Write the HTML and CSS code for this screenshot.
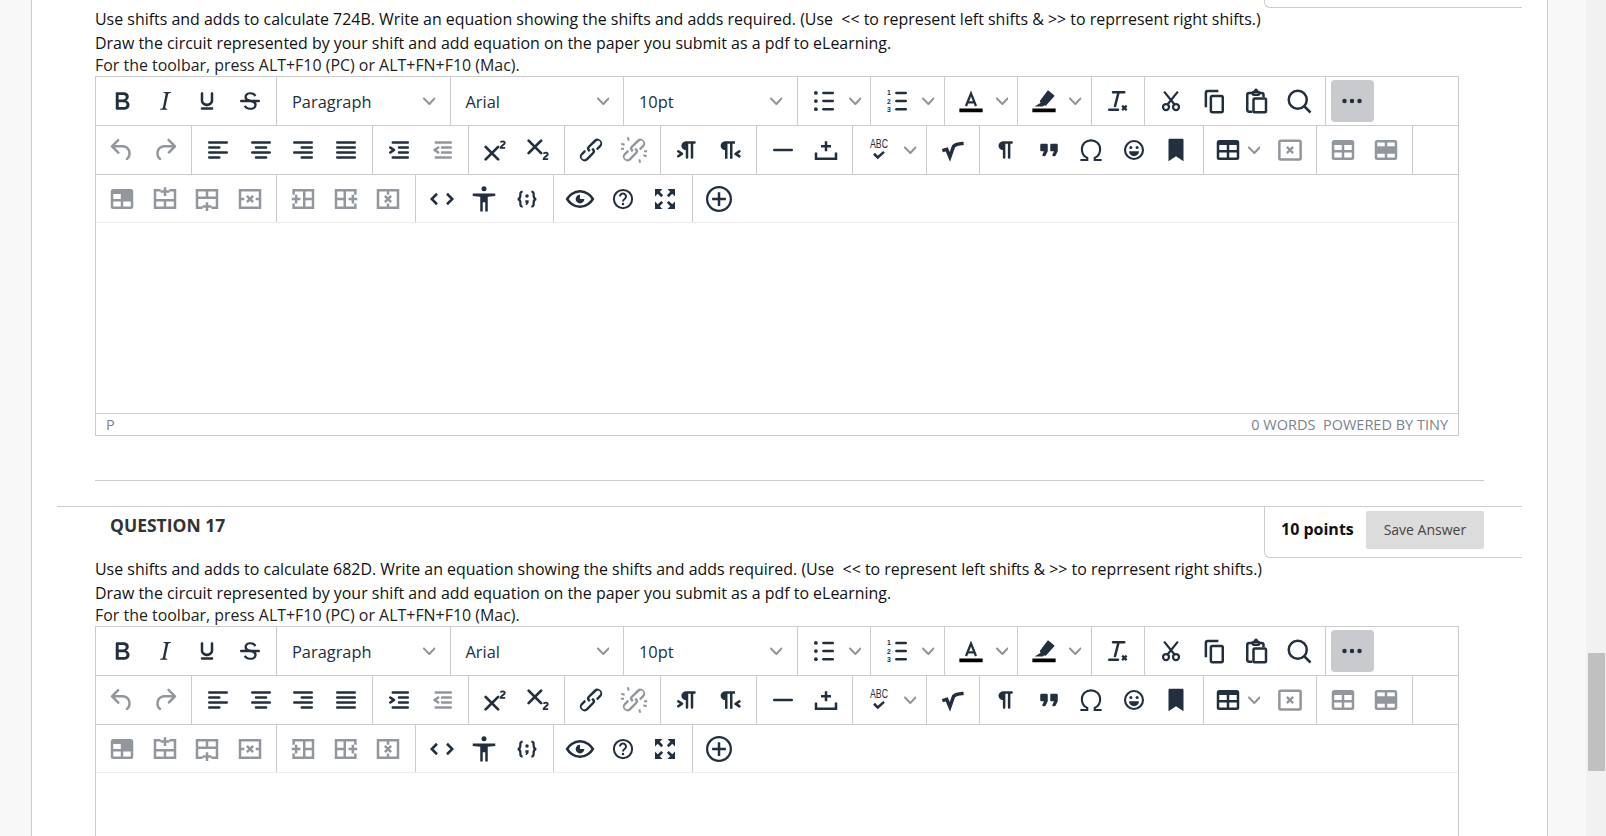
FILE: index.html
```html
<!DOCTYPE html>
<html lang="en">

<head>
    <meta charset="UTF-8">
    <meta name="viewport" content="width=device-width, initial-scale=1.0">
    <title>Test Questions</title>
    <link rel="stylesheet" href="styles.css">
</head>

<body>
    <!-- toolbar icons, 24 unit grid -->
    <svg class="defs" aria-hidden="true">
        <symbol id="i-bold" viewBox="0 0 24 24"><path d="M7.8 19c-.3 0-.5 0-.6-.2l-.2-.5V5.7c0-.2 0-.4.2-.5l.6-.2h5c1.5 0 2.7.3 3.500 1 .7.6 1.100 1.400 1.100 2.500a3 3 0 0 1-.6 1.900c-.4.6-1 1-1.600 1.200.4.1.9.3 1.300.6s.8.7 1 1.200c.4.4.5 1 .5 1.600 0 1.300-.4 2.300-1.300 3-.8.7-2.100 1-3.800 1H7.800zm5-8.300c.6 0 1.200-.1 1.600-.5.4-.3.6-.7.6-1.300 0-1.100-.8-1.700-2.300-1.700H9.300v3.500h3.400zm.5 6c.7 0 1.300-.1 1.700-.4.4-.4.6-.9.6-1.500s-.2-1-.7-1.400c-.4-.3-1-.4-2-.4H9.400v3.800h4z"/></symbol>
        <symbol id="i-italic" viewBox="0 0 24 24"><path d="M16.7 4.7l-.1.9h-.3c-.6 0-1 0-1.400.3-.3.3-.4.6-.5 1.100l-2.100 9.800v.6c0 .5.4.8 1.400.8h.2l-.2.8H8l.2-.8h.2c1.100 0 1.800-.5 2-1.500l2-9.800.1-.5c0-.6-.4-.8-1.400-.8h-.3l.2-.9h5.800z"/></symbol>
        <symbol id="i-underline" viewBox="0 0 24 24"><path d="M16 5c.6 0 1 .4 1 1v5.500a4 4 0 0 1-.4 1.800l-1 1.400a5.300 5.300 0 0 1-5.500 1 5 5 0 0 1-1.600-1c-.5-.4-.8-.9-1.100-1.400a4 4 0 0 1-.4-1.800V6c0-.6.4-1 1-1s1 .4 1 1v5.500c0 .3 0 .6.2 1l.6.7a3.300 3.300 0 0 0 2.200.8 3.400 3.400 0 0 0 2.200-.8c.3-.2.4-.5.6-.8l.2-.9V6c0-.6.4-1 1-1zM8 17h8c.6 0 1 .4 1 1s-.4 1-1 1H8a1 1 0 0 1 0-2z"/></symbol>
        <symbol id="i-strike" viewBox="0 0 24 24"><path d="M15.600 8.500c-.5-.7-1-1.100-1.300-1.300-.6-.4-1.300-.6-2-.6-2.700 0-2.800 1.700-2.800 2.100 0 1.600 1.800 2 3.200 2.300 4.400.9 4.600 2.800 4.600 3.900 0 1.400-.7 4.100-5 4.100A6.200 6.200 0 0 1 7 16.400l1.500-1.100c.4.6 1.600 2 3.700 2 1.600 0 2.500-.4 3-1.200.4-.8.3-2-.8-2.600-.7-.4-1.600-.7-2.900-1-1-.2-3.900-.8-3.900-3.600C7.600 6 10.300 5 12.400 5c2.900 0 4.200 1.600 4.700 2.400l-1.500 1.100z"/><path d="M5 11h14a1 1 0 0 1 0 2H5a1 1 0 0 1 0-2z"/></symbol>
        <symbol id="i-chevron" viewBox="0 0 10 10"><path d="M8.700 2.200c.3-.3.8-.3 1 0 .4.4.4.9 0 1.200L5.700 7.800c-.3.3-.9.3-1.200 0L.2 3.400a.8.8 0 0 1 0-1.200c.3-.3.8-.3 1.100 0L5 6l3.700-3.800z"/></symbol>
        <symbol id="i-bullist" viewBox="0 0 24 24"><circle cx="5.500" cy="5.500" r="1.500"/><circle cx="5.500" cy="12" r="1.500"/><circle cx="5.500" cy="18.500" r="1.500"/><rect x="10.500" y="4.500" width="9.500" height="2" rx="1"/><rect x="10.500" y="11" width="9.500" height="2" rx="1"/><rect x="10.500" y="17.500" width="9.500" height="2" rx="1"/></symbol>
        <symbol id="i-numlist" viewBox="0 0 24 24"><text class="icon-num" x="5.500" y="7.500">1</text><text class="icon-num" x="5.500" y="14">2</text><text class="icon-num" x="5.500" y="20.500">3</text><rect x="10.500" y="4.500" width="9.500" height="2" rx="1"/><rect x="10.500" y="11" width="9.500" height="2" rx="1"/><rect x="10.500" y="17.500" width="9.500" height="2" rx="1"/></symbol>
        <symbol id="i-forecolor" viewBox="0 0 24 24"><path d="M8 16l4-10 4 10M9.400 13h5.200" fill="none" stroke="currentColor" stroke-width="1.800"/><rect class="swatch" x="2.700" y="18" width="18.600" height="3"/></symbol>
        <symbol id="i-hilite" viewBox="0 0 24 24"><path d="M15.500 3.600l4.600 3.700c.3.3.3.7 0 1l-6.500 7.200c-.3.3-.7.3-1 .1l-.4-.3-1.300 1H4.500l4.800-3-.5-.8c-.2-.3-.2-.7.1-1l5.900-7.800c.2-.2.5-.2.700-.1z"/><rect class="swatch" x="2.700" y="18" width="18.600" height="3"/></symbol>
        <symbol id="i-clear" viewBox="0 0 24 24"><path d="M13.200 6a1 1 0 0 1 0 .2l-2.600 10a1 1 0 0 1-1 .8h-.2a.8.8 0 0 1-.8-1l2.600-10H8a1 1 0 1 1 0-2h9a1 1 0 0 1 0 2h-3.800zM5 18h7a1 1 0 0 1 0 2H5a1 1 0 0 1 0-2z"/><path d="M15.300 15.700l3.600 3.600m0-3.600l-3.600 3.600" fill="none" stroke="currentColor" stroke-width="1.800"/></symbol>
        <symbol id="i-cut" viewBox="0 0 24 24"><g fill="none" stroke="currentColor" stroke-width="1.800"><circle cx="8" cy="16.800" r="2.400"/><circle cx="16" cy="16.800" r="2.400"/><path d="M6.500 4.500L15 15M17.500 4.500L9 15"/></g></symbol>
        <symbol id="i-copy" viewBox="0 0 24 24"><g fill="none" stroke="currentColor" stroke-width="2"><path d="M15.500 4H7a1.500 1.500 0 0 0-1.500 1.500V17"/><rect x="9.500" y="8" width="9.500" height="13" rx="1.200"/></g></symbol>
        <symbol id="i-paste" viewBox="0 0 24 24"><g fill="none" stroke="currentColor" stroke-width="2"><path d="M9 20.500H6.500A1.500 1.500 0 0 1 5 19V7a1.500 1.500 0 0 1 1.500-1.500H9M15 5.500h1.500A1.500 1.500 0 0 1 18 7v2"/><rect x="10" y="10" width="10" height="11" rx="1"/><rect x="9.500" y="4.500" width="5" height="2.500" rx="1"/></g><circle cx="12" cy="3.500" r="1.500"/></symbol>
        <symbol id="i-search" viewBox="0 0 24 24"><g fill="none" stroke="currentColor" stroke-width="2"><circle cx="11" cy="11" r="7.200"/><path d="M16 16l5.200 5.200"/></g></symbol>
        <symbol id="i-more" viewBox="0 0 24 24"><circle cx="6" cy="12" r="1.800"/><circle cx="12" cy="12" r="1.800"/><circle cx="18" cy="12" r="1.800"/></symbol>
        <symbol id="i-undo" viewBox="0 0 24 24"><path d="M6.400 8H12c3.700 0 6.200 2 6.800 5.100.6 2.700-.4 5.600-2.300 6.800a1 1 0 0 1-1-1.800c1.100-.6 1.800-2.700 1.400-4.600-.5-2.100-2.100-3.500-4.900-3.500H6.400l3.300 3.300a1 1 0 1 1-1.400 1.400l-5-5a1 1 0 0 1 0-1.400l5-5a1 1 0 0 1 1.400 1.400L6.400 8z"/></symbol>
        <symbol id="i-redo" viewBox="0 0 24 24"><path d="M17.600 10H12c-2.800 0-4.400 1.400-4.900 3.500-.4 2 .3 4 1.400 4.600a1 1 0 1 1-1 1.800c-1.900-1.200-2.900-4.100-2.300-6.800.6-3 3.100-5.100 6.800-5.100h5.600l-3.300-3.300a1 1 0 1 1 1.400-1.400l5 5a1 1 0 0 1 0 1.400l-5 5a1 1 0 0 1-1.400-1.400l3.300-3.300z"/></symbol>
        <symbol id="i-left" viewBox="0 0 24 24"><rect x="4" y="5" width="16" height="2" rx="1"/><rect x="4" y="9" width="10" height="2" rx="1"/><rect x="4" y="13" width="16" height="2" rx="1"/><rect x="4" y="17" width="10" height="2" rx="1"/></symbol>
        <symbol id="i-center" viewBox="0 0 24 24"><rect x="4" y="5" width="16" height="2" rx="1"/><rect x="7" y="9" width="10" height="2" rx="1"/><rect x="4" y="13" width="16" height="2" rx="1"/><rect x="7" y="17" width="10" height="2" rx="1"/></symbol>
        <symbol id="i-right" viewBox="0 0 24 24"><rect x="4" y="5" width="16" height="2" rx="1"/><rect x="10" y="9" width="10" height="2" rx="1"/><rect x="4" y="13" width="16" height="2" rx="1"/><rect x="10" y="17" width="10" height="2" rx="1"/></symbol>
        <symbol id="i-justify" viewBox="0 0 24 24"><rect x="4" y="5" width="16" height="2" rx="1"/><rect x="4" y="9" width="16" height="2" rx="1"/><rect x="4" y="13" width="16" height="2" rx="1"/><rect x="4" y="17" width="16" height="2" rx="1"/></symbol>
        <symbol id="i-indent" viewBox="0 0 24 24"><path d="M7 5h12c.6 0 1 .4 1 1s-.4 1-1 1H7a1 1 0 1 1 0-2zm5 4h7c.6 0 1 .4 1 1s-.4 1-1 1h-7a1 1 0 0 1 0-2zm0 4h7c.6 0 1 .4 1 1s-.4 1-1 1h-7a1 1 0 0 1 0-2zm-5 4h12a1 1 0 0 1 0 2H7a1 1 0 0 1 0-2zm-2.600-3.800L6.200 12l-1.800-1.200a1 1 0 0 1 1.200-1.600l3 2a1 1 0 0 1 0 1.600l-3 2a1 1 0 1 1-1.200-1.600z"/></symbol>
        <symbol id="i-outdent" viewBox="0 0 24 24"><path d="M7 5h12c.6 0 1 .4 1 1s-.4 1-1 1H7a1 1 0 1 1 0-2zm5 4h7c.6 0 1 .4 1 1s-.4 1-1 1h-7a1 1 0 0 1 0-2zm0 4h7c.6 0 1 .4 1 1s-.4 1-1 1h-7a1 1 0 0 1 0-2zm-5 4h12a1 1 0 0 1 0 2H7a1 1 0 0 1 0-2zm2.600-6.200L7.800 12l1.800 1.200a1 1 0 1 1-1.200 1.600l-3-2a1 1 0 0 1 0-1.600l3-2a1 1 0 1 1 1.200 1.600z"/></symbol>
        <symbol id="i-sup" viewBox="0 0 24 24"><path d="M4.500 9.500l10 10M14.500 9.500l-10 10" fill="none" stroke="currentColor" stroke-width="2.200" stroke-linecap="round"/><path d="M16.500 6c.3-1.200 3.300-1.400 3.300.4 0 1.400-3.300 2.400-3.300 3.900h3.600" fill="none" stroke="currentColor" stroke-width="1.500"/></symbol>
        <symbol id="i-sub" viewBox="0 0 24 24"><path d="M4.500 4.500l10 10M14.500 4.500l-10 10" fill="none" stroke="currentColor" stroke-width="2.200" stroke-linecap="round"/><path d="M16.500 15c.3-1.200 3.300-1.400 3.300.4 0 1.400-3.300 2.400-3.300 3.900h3.600" fill="none" stroke="currentColor" stroke-width="1.500"/></symbol>
        <symbol id="i-link" viewBox="0 0 24 24"><path d="M6.200 12.300a1 1 0 0 1 1.400 1.400l-2 2a2 2 0 1 0 2.600 2.800l4.800-4.800a1 1 0 0 0 0-1.400 1 1 0 1 1 1.400-1.300 2.900 2.900 0 0 1 0 4L9.600 20a3.900 3.900 0 0 1-5.500-5.500l2-2zm11.600-.6a1 1 0 0 1-1.400-1.400l2-2a2 2 0 1 0-2.600-2.800L11 10a1 1 0 0 0 0 1.400 1 1 0 1 1-1.400 1.300 2.900 2.900 0 0 1 0-4L14.400 4a3.900 3.900 0 0 1 5.500 5.500l-2 2z"/></symbol>
        <symbol id="i-unlink" viewBox="0 0 24 24"><path d="M6.200 12.300a1 1 0 0 1 1.400 1.400l-2 2a2 2 0 1 0 2.600 2.800l4.800-4.800a1 1 0 0 0 0-1.400 1 1 0 1 1 1.400-1.300 2.900 2.900 0 0 1 0 4L9.600 20a3.900 3.900 0 0 1-5.500-5.500l2-2zm11.600-.6a1 1 0 0 1-1.400-1.400l2-2a2 2 0 1 0-2.600-2.800L11 10a1 1 0 0 0 0 1.400 1 1 0 1 1-1.400 1.300 2.900 2.900 0 0 1 0-4L14.400 4a3.900 3.900 0 0 1 5.500 5.500l-2 2z"/><path d="M7 1.800l.8 2.700M1.800 7l2.700.8M1.500 11H4M17 22.200l-.8-2.700M22.200 17l-2.700-.8M22.500 13H20" fill="none" stroke="currentColor" stroke-width="1.600"/></symbol>
        <symbol id="i-ltr" viewBox="0 0 24 24"><path d="M11 5h7a1 1 0 0 1 0 2h-1v11a1 1 0 0 1-2 0V7h-2v11a1 1 0 0 1-2 0v-6c-.5 0-1 0-1.400-.3A3.400 3.400 0 0 1 7.800 10a3.300 3.300 0 0 1 0-2.800 3.400 3.400 0 0 1 1.800-1.800L11 5zM4.400 16.200L6.200 15l-1.800-1.200a1 1 0 0 1 1.200-1.600l3 2a1 1 0 0 1 0 1.600l-3 2a1 1 0 1 1-1.200-1.600z"/></symbol>
        <symbol id="i-rtl" viewBox="0 0 24 24"><path d="M8 5h8v2h-2v12h-2V7h-2v12H8v-7c-.5 0-1 0-1.400-.3A3.400 3.400 0 0 1 4.800 10a3.300 3.300 0 0 1 0-2.800 3.400 3.400 0 0 1 1.800-1.800L8 5zm12 11.200a1 1 0 1 1-1 1.800l-3-2a1 1 0 0 1 0-1.800l3-2a1 1 0 1 1 1 1.800L18.400 15l1.800 1.200z"/></symbol>
        <symbol id="i-hr" viewBox="0 0 24 24"><rect x="4" y="11" width="16" height="2" rx="1"/></symbol>
        <symbol id="i-pagebreak" viewBox="0 0 24 24"><path d="M12 5v8M8 9h8M4 14v5h16v-5" fill="none" stroke="currentColor" stroke-width="2"/></symbol>
        <symbol id="i-spell" viewBox="0 0 24 24"><text class="icon-abc" x="12" y="10.500" textLength="14.500" lengthAdjust="spacingAndGlyphs">ABC</text><path d="M8 15l3 3 5-4.500" fill="none" stroke="currentColor" stroke-width="2"/></symbol>
        <symbol id="i-sqrt" viewBox="0 0 24 24"><path d="M3.500 12.500l3.500-1 2.500 6 3-8.500c2-2 4.500-2 8-2.300" fill="none" stroke="currentColor" stroke-width="2.800"/></symbol>
        <symbol id="i-para" viewBox="0 0 24 24"><path d="M9.500 5h7a1 1 0 0 1 0 2h-1v11a1 1 0 0 1-2 0V7h-2v11a1 1 0 0 1-2 0v-6c-.5 0-1 0-1.400-.3A3.400 3.400 0 0 1 6.300 10a3.300 3.300 0 0 1 0-2.800 3.400 3.400 0 0 1 1.800-1.800L9.500 5z"/></symbol>
        <symbol id="i-quote" viewBox="0 0 24 24"><path d="M7.500 17h.9c.4 0 .7-.2.9-.6L11 13V8c0-.6-.4-1-1-1H6a1 1 0 0 0-1 1v4c0 .6.4 1 1 1h2l-1.300 2.700a1 1 0 0 0 .8 1.300zm8 0h.9c.4 0 .7-.2.9-.6L19 13V8c0-.6-.4-1-1-1h-4a1 1 0 0 0-1 1v4c0 .6.4 1 1 1h2l-1.300 2.700a1 1 0 0 0 .8 1.300z"/></symbol>
        <symbol id="i-omega" viewBox="0 0 24 24"><path d="M3.500 20H9v-1.700C6.300 17 4.700 14.300 4.700 11.300 4.700 7 8 4.300 12 4.300s7.300 2.700 7.300 7c0 3-1.600 5.700-4.300 7V20h5.500" fill="none" stroke="currentColor" stroke-width="1.700"/></symbol>
        <symbol id="i-emoji" viewBox="0 0 24 24"><circle cx="12" cy="12" r="7.200" fill="none" stroke="currentColor" stroke-width="1.700"/><circle cx="9.500" cy="10" r="1.200"/><circle cx="14.500" cy="10" r="1.200"/><path d="M8 13h8a4 4 0 0 1-8 0z"/></symbol>
        <symbol id="i-bookmark" viewBox="0 0 24 24"><path d="M6 4v17l6-4 6 4V4c0-.6-.4-1-1-1H7a1 1 0 0 0-1 1z"/></symbol>
        <symbol id="i-table" viewBox="0 0 24 24"><path fill-rule="evenodd" d="M19 4a2 2 0 0 1 2 2v12a2 2 0 0 1-2 2H5a2 2 0 0 1-2-2V6c0-1.100.9-2 2-2h14zM5 14v4h6v-4H5zm14 0h-6v4h6v-4zm0-6h-6v4h6V8zM5 12h6V8H5v4z"/></symbol>
        <symbol id="i-tabledel" viewBox="0 0 24 24"><rect x="3.500" y="4.500" width="17" height="15" rx="1" fill="none" stroke="currentColor" stroke-width="2"/><path d="M9.500 9.500l5 5m0-5l-5 5" fill="none" stroke="currentColor" stroke-width="1.800"/></symbol>
        <symbol id="i-rowprops" viewBox="0 0 24 24"><path fill-rule="evenodd" d="M19 4a2 2 0 0 1 2 2v12a2 2 0 0 1-2 2H5a2 2 0 0 1-2-2V6c0-1.100.9-2 2-2h14zM5 15v3h6v-3H5zm14 0h-6v3h6v-3zM13 6v3h6V6h-6zM5 9h6V6H5v3z"/></symbol>
        <symbol id="i-cellprops" viewBox="0 0 24 24"><path fill-rule="evenodd" d="M19 4a2 2 0 0 1 2 2v12a2 2 0 0 1-2 2H5a2 2 0 0 1-2-2V6c0-1.100.9-2 2-2h14zM5 14v4h6v-4H5zm14 0h-6v4h6v-4zM5 12h6V8H5v4z"/></symbol>
        <symbol id="i-rowbefore" viewBox="0 0 24 24"><path d="M8.500 5H4v14h16V5h-4.500M4 13h16M12 13v6M12 2.500v7M8.500 6h7" fill="none" stroke="currentColor" stroke-width="2"/></symbol>
        <symbol id="i-rowafter" viewBox="0 0 24 24"><path d="M8.500 19H4V5h16v14h-4.500M4 11h16M12 5v6M12 14.500v7M8.500 18h7" fill="none" stroke="currentColor" stroke-width="2"/></symbol>
        <symbol id="i-rowdel" viewBox="0 0 24 24"><path d="M4 5h16v14H4zM4 12h3.500M16.500 12H20M9.500 9.500l5 5m0-5l-5 5" fill="none" stroke="currentColor" stroke-width="2"/></symbol>
        <symbol id="i-colbefore" viewBox="0 0 24 24"><path d="M4.500 8.500V5H20v14H4.500v-3.500M13 5v14M13 12h7M3 12h7M6.500 8.500v7" fill="none" stroke="currentColor" stroke-width="2"/></symbol>
        <symbol id="i-colafter" viewBox="0 0 24 24"><path d="M19.500 8.500V5H4v14h15.500v-3.500M11 5v14M4 12h7M14 12h7M17.500 8.500v7" fill="none" stroke="currentColor" stroke-width="2"/></symbol>
        <symbol id="i-coldel" viewBox="0 0 24 24"><path d="M4 5h16v14H4zM12 5v3.500M12 15.500V19M9.500 9.500l5 5m0-5l-5 5" fill="none" stroke="currentColor" stroke-width="2"/></symbol>
        <symbol id="i-code" viewBox="0 0 24 24"><path d="M8 7.800L3.800 12 8 16.200M16 7.800l4.200 4.200-4.200 4.200" fill="none" stroke="currentColor" stroke-width="2"/></symbol>
        <symbol id="i-access" viewBox="0 0 24 24"><circle cx="12" cy="3.800" r="2"/><path d="M3 7.500h18v2l-6 .7V22h-2v-7.500h-2V22H9V10.200l-6-.7z"/></symbol>
        <symbol id="i-template" viewBox="0 0 24 24"><path d="M8.500 6C6.500 6 6.700 7.500 6.700 9c0 1.600-.5 3-2.200 3 1.700 0 2.200 1.400 2.200 3 0 1.500-.2 3 1.800 3M15.500 6c2 0 1.800 1.500 1.800 3 0 1.600.5 3 2.200 3-1.700 0-2.200 1.400-2.200 3 0 1.500.2 3-1.800 3" fill="none" stroke="currentColor" stroke-width="1.800"/><circle cx="12" cy="9.500" r="1.400"/><path d="M10.700 13h2.600v2l-1.400 1.800h-1.100l.6-1.800h-.7z"/></symbol>
        <symbol id="i-preview" viewBox="0 0 24 24"><path d="M12 5.800C6.800 5.800 3 9.800 1.700 12 3 14.200 6.800 18.200 12 18.200S21 14.200 22.300 12C21 9.800 17.200 5.800 12 5.800z" fill="none" stroke="currentColor" stroke-width="2"/><path d="M12 8.500a3.500 3.500 0 1 0 3.500 3.500h-3.500z"/></symbol>
        <symbol id="i-help" viewBox="0 0 24 24"><circle cx="12" cy="12" r="7.300" fill="none" stroke="currentColor" stroke-width="1.600"/><path d="M9.600 10a2.400 2.400 0 1 1 3.700 2c-.9.600-1.300 1-1.300 2" fill="none" stroke="currentColor" stroke-width="1.600"/><circle cx="12" cy="16" r="1"/></symbol>
        <symbol id="i-full" viewBox="0 0 24 24"><path d="M4 4h6L7.800 6.200 10.500 9 9 10.500 6.200 7.800 4 10zM20 4h-6l2.200 2.200L13.500 9 15 10.500l2.800-2.700L20 10zM4 20h6l-2.200-2.200 2.700-2.800L9 13.500l-2.800 2.700L4 14zM20 20h-6l2.200-2.200-2.700-2.800 1.500-1.500 2.800 2.700L20 14z"/></symbol>
        <symbol id="i-plus" viewBox="0 0 24 24"><circle cx="12" cy="12" r="9.500" fill="none" stroke="currentColor" stroke-width="1.800"/><path d="M12 6.500v11M6.500 12h11" fill="none" stroke="currentColor" stroke-width="2"/></symbol>
    </svg>

    <div class="gutter"></div>

    <main class="content">
        <!-- end of the previous question, scrolled almost out of view -->
        <div class="q-head stub">
            <div class="q-points"></div>
        </div>
        <div class="q-body">
            <p class="q-text">Use shifts and adds to calculate 724B. Write an equation showing the shifts and adds required. (Use &nbsp;&lt;&lt; to represent left shifts &amp; &gt;&gt; to reprresent right shifts.)</p>
            <p class="q-text">Draw the circuit represented by your shift and add equation on the paper you submit as a pdf to eLearning.</p>
            <p class="q-hint">For the toolbar, press ALT+F10 (PC) or ALT+FN+F10 (Mac).</p>
            <div class="editor">
                <div class="tb-row">
                    <div class="tb-group"><button class="btn"><svg><use href="#i-bold"/></svg></button><button class="btn"><svg><use href="#i-italic"/></svg></button><button class="btn"><svg><use href="#i-underline"/></svg></button><button class="btn"><svg><use href="#i-strike"/></svg></button></div>
                    <div class="tb-group sel"><button class="select"><span>Paragraph</span><svg class="chev"><use href="#i-chevron"/></svg></button></div>
                    <div class="tb-group sel"><button class="select"><span>Arial</span><svg class="chev"><use href="#i-chevron"/></svg></button></div>
                    <div class="tb-group sel"><button class="select"><span>10pt</span><svg class="chev"><use href="#i-chevron"/></svg></button></div>
                    <div class="tb-group"><button class="split"><svg><use href="#i-bullist"/></svg><svg class="chev"><use href="#i-chevron"/></svg></button></div>
                    <div class="tb-group"><button class="split"><svg><use href="#i-numlist"/></svg><svg class="chev"><use href="#i-chevron"/></svg></button></div>
                    <div class="tb-group"><button class="split"><svg><use href="#i-forecolor"/></svg><svg class="chev"><use href="#i-chevron"/></svg></button></div>
                    <div class="tb-group"><button class="split"><svg><use href="#i-hilite"/></svg><svg class="chev"><use href="#i-chevron"/></svg></button></div>
                    <div class="tb-group"><button class="btn"><svg><use href="#i-clear"/></svg></button></div>
                    <div class="tb-group"><button class="btn"><svg><use href="#i-cut"/></svg></button><button class="btn"><svg><use href="#i-copy"/></svg></button><button class="btn"><svg><use href="#i-paste"/></svg></button><button class="btn"><svg><use href="#i-search"/></svg></button></div>
                    <div class="tb-group last"><button class="btn on"><svg><use href="#i-more"/></svg></button></div>
                </div>
                <div class="tb-row">
                    <div class="tb-group"><button class="btn off"><svg><use href="#i-undo"/></svg></button><button class="btn off"><svg><use href="#i-redo"/></svg></button></div>
                    <div class="tb-group"><button class="btn"><svg><use href="#i-left"/></svg></button><button class="btn"><svg><use href="#i-center"/></svg></button><button class="btn"><svg><use href="#i-right"/></svg></button><button class="btn"><svg><use href="#i-justify"/></svg></button></div>
                    <div class="tb-group"><button class="btn"><svg><use href="#i-indent"/></svg></button><button class="btn off"><svg><use href="#i-outdent"/></svg></button></div>
                    <div class="tb-group"><button class="btn"><svg><use href="#i-sup"/></svg></button><button class="btn"><svg><use href="#i-sub"/></svg></button></div>
                    <div class="tb-group"><button class="btn"><svg><use href="#i-link"/></svg></button><button class="btn off"><svg><use href="#i-unlink"/></svg></button></div>
                    <div class="tb-group"><button class="btn"><svg><use href="#i-ltr"/></svg></button><button class="btn"><svg><use href="#i-rtl"/></svg></button></div>
                    <div class="tb-group"><button class="btn"><svg><use href="#i-hr"/></svg></button><button class="btn"><svg><use href="#i-pagebreak"/></svg></button></div>
                    <div class="tb-group"><button class="split"><svg><use href="#i-spell"/></svg><svg class="chev"><use href="#i-chevron"/></svg></button></div>
                    <div class="tb-group"><button class="btn"><svg><use href="#i-sqrt"/></svg></button></div>
                    <div class="tb-group"><button class="btn"><svg><use href="#i-para"/></svg></button><button class="btn"><svg><use href="#i-quote"/></svg></button><button class="btn"><svg><use href="#i-omega"/></svg></button><button class="btn"><svg><use href="#i-emoji"/></svg></button><button class="btn"><svg><use href="#i-bookmark"/></svg></button></div>
                    <div class="tb-group"><button class="split tight"><svg><use href="#i-table"/></svg><svg class="chev"><use href="#i-chevron"/></svg></button><button class="btn off"><svg><use href="#i-tabledel"/></svg></button></div>
                    <div class="tb-group"><button class="btn off"><svg><use href="#i-table"/></svg></button><button class="btn off"><svg><use href="#i-rowprops"/></svg></button></div>
                </div>
                <div class="tb-row thin">
                    <div class="tb-group"><button class="btn off"><svg><use href="#i-cellprops"/></svg></button><button class="btn off"><svg><use href="#i-rowbefore"/></svg></button><button class="btn off"><svg><use href="#i-rowafter"/></svg></button><button class="btn off"><svg><use href="#i-rowdel"/></svg></button></div>
                    <div class="tb-group"><button class="btn off"><svg><use href="#i-colbefore"/></svg></button><button class="btn off"><svg><use href="#i-colafter"/></svg></button><button class="btn off"><svg><use href="#i-coldel"/></svg></button></div>
                    <div class="tb-group"><button class="btn"><svg><use href="#i-code"/></svg></button><button class="btn"><svg><use href="#i-access"/></svg></button><button class="btn"><svg><use href="#i-template"/></svg></button></div>
                    <div class="tb-group"><button class="btn"><svg><use href="#i-preview"/></svg></button><button class="btn"><svg><use href="#i-help"/></svg></button><button class="btn"><svg><use href="#i-full"/></svg></button></div>
                    <div class="tb-group last"><button class="btn"><svg><use href="#i-plus"/></svg></button></div>
                </div>
                <div class="edit-area"></div>
                <div class="status"><span>P</span><span>0 WORDS &nbsp;POWERED BY TINY</span></div>
            </div>
            <hr class="q-rule">
        </div>

        <div class="q-head">
            <h3 class="q-title">QUESTION 17</h3>
            <div class="q-points"><strong>10 points</strong><button class="save-btn">Save Answer</button></div>
        </div>
        <div class="q-body">
            <p class="q-text">Use shifts and adds to calculate 682D. Write an equation showing the shifts and adds required. (Use &nbsp;&lt;&lt; to represent left shifts &amp; &gt;&gt; to reprresent right shifts.)</p>
            <p class="q-text">Draw the circuit represented by your shift and add equation on the paper you submit as a pdf to eLearning.</p>
            <p class="q-hint">For the toolbar, press ALT+F10 (PC) or ALT+FN+F10 (Mac).</p>
            <div class="editor">
                <div class="tb-row">
                    <div class="tb-group"><button class="btn"><svg><use href="#i-bold"/></svg></button><button class="btn"><svg><use href="#i-italic"/></svg></button><button class="btn"><svg><use href="#i-underline"/></svg></button><button class="btn"><svg><use href="#i-strike"/></svg></button></div>
                    <div class="tb-group sel"><button class="select"><span>Paragraph</span><svg class="chev"><use href="#i-chevron"/></svg></button></div>
                    <div class="tb-group sel"><button class="select"><span>Arial</span><svg class="chev"><use href="#i-chevron"/></svg></button></div>
                    <div class="tb-group sel"><button class="select"><span>10pt</span><svg class="chev"><use href="#i-chevron"/></svg></button></div>
                    <div class="tb-group"><button class="split"><svg><use href="#i-bullist"/></svg><svg class="chev"><use href="#i-chevron"/></svg></button></div>
                    <div class="tb-group"><button class="split"><svg><use href="#i-numlist"/></svg><svg class="chev"><use href="#i-chevron"/></svg></button></div>
                    <div class="tb-group"><button class="split"><svg><use href="#i-forecolor"/></svg><svg class="chev"><use href="#i-chevron"/></svg></button></div>
                    <div class="tb-group"><button class="split"><svg><use href="#i-hilite"/></svg><svg class="chev"><use href="#i-chevron"/></svg></button></div>
                    <div class="tb-group"><button class="btn"><svg><use href="#i-clear"/></svg></button></div>
                    <div class="tb-group"><button class="btn"><svg><use href="#i-cut"/></svg></button><button class="btn"><svg><use href="#i-copy"/></svg></button><button class="btn"><svg><use href="#i-paste"/></svg></button><button class="btn"><svg><use href="#i-search"/></svg></button></div>
                    <div class="tb-group last"><button class="btn on"><svg><use href="#i-more"/></svg></button></div>
                </div>
                <div class="tb-row">
                    <div class="tb-group"><button class="btn off"><svg><use href="#i-undo"/></svg></button><button class="btn off"><svg><use href="#i-redo"/></svg></button></div>
                    <div class="tb-group"><button class="btn"><svg><use href="#i-left"/></svg></button><button class="btn"><svg><use href="#i-center"/></svg></button><button class="btn"><svg><use href="#i-right"/></svg></button><button class="btn"><svg><use href="#i-justify"/></svg></button></div>
                    <div class="tb-group"><button class="btn"><svg><use href="#i-indent"/></svg></button><button class="btn off"><svg><use href="#i-outdent"/></svg></button></div>
                    <div class="tb-group"><button class="btn"><svg><use href="#i-sup"/></svg></button><button class="btn"><svg><use href="#i-sub"/></svg></button></div>
                    <div class="tb-group"><button class="btn"><svg><use href="#i-link"/></svg></button><button class="btn off"><svg><use href="#i-unlink"/></svg></button></div>
                    <div class="tb-group"><button class="btn"><svg><use href="#i-ltr"/></svg></button><button class="btn"><svg><use href="#i-rtl"/></svg></button></div>
                    <div class="tb-group"><button class="btn"><svg><use href="#i-hr"/></svg></button><button class="btn"><svg><use href="#i-pagebreak"/></svg></button></div>
                    <div class="tb-group"><button class="split"><svg><use href="#i-spell"/></svg><svg class="chev"><use href="#i-chevron"/></svg></button></div>
                    <div class="tb-group"><button class="btn"><svg><use href="#i-sqrt"/></svg></button></div>
                    <div class="tb-group"><button class="btn"><svg><use href="#i-para"/></svg></button><button class="btn"><svg><use href="#i-quote"/></svg></button><button class="btn"><svg><use href="#i-omega"/></svg></button><button class="btn"><svg><use href="#i-emoji"/></svg></button><button class="btn"><svg><use href="#i-bookmark"/></svg></button></div>
                    <div class="tb-group"><button class="split tight"><svg><use href="#i-table"/></svg><svg class="chev"><use href="#i-chevron"/></svg></button><button class="btn off"><svg><use href="#i-tabledel"/></svg></button></div>
                    <div class="tb-group"><button class="btn off"><svg><use href="#i-table"/></svg></button><button class="btn off"><svg><use href="#i-rowprops"/></svg></button></div>
                </div>
                <div class="tb-row thin">
                    <div class="tb-group"><button class="btn off"><svg><use href="#i-cellprops"/></svg></button><button class="btn off"><svg><use href="#i-rowbefore"/></svg></button><button class="btn off"><svg><use href="#i-rowafter"/></svg></button><button class="btn off"><svg><use href="#i-rowdel"/></svg></button></div>
                    <div class="tb-group"><button class="btn off"><svg><use href="#i-colbefore"/></svg></button><button class="btn off"><svg><use href="#i-colafter"/></svg></button><button class="btn off"><svg><use href="#i-coldel"/></svg></button></div>
                    <div class="tb-group"><button class="btn"><svg><use href="#i-code"/></svg></button><button class="btn"><svg><use href="#i-access"/></svg></button><button class="btn"><svg><use href="#i-template"/></svg></button></div>
                    <div class="tb-group"><button class="btn"><svg><use href="#i-preview"/></svg></button><button class="btn"><svg><use href="#i-help"/></svg></button><button class="btn"><svg><use href="#i-full"/></svg></button></div>
                    <div class="tb-group last"><button class="btn"><svg><use href="#i-plus"/></svg></button></div>
                </div>
                <div class="edit-area"></div>
            </div>
        </div>
    </main>

    <div class="side"></div>
    <div class="scrollbar"><div class="thumb"></div></div>
</body>

</html>
```

FILE: styles.css
```css
* {
    box-sizing: border-box;
}

html,
body {
    height: 836px;
    overflow: hidden;
}

body {
    margin: 0;
    display: flex;
    font-family: "Open Sans", sans-serif;
    color: #222;
    background: #fff;
}

.defs {
    display: none;
}

.gutter {
    width: 31px;
    flex: none;
    background: #f8f8f8;
}

.side {
    width: 38px;
    flex: none;
    background: #f8f8f8;
}

.scrollbar {
    width: 21px;
    flex: none;
    padding-top: 653px;
    background: #f1f1f1;
}

.thumb {
    width: 17px;
    height: 118px;
    margin-left: 2px;
    background: #c0c0c0;
}

.content {
    width: 1517px;
    flex: none;
    padding: 0 25px;
    border-left: 1px solid #ccc;
    border-right: 1px solid #ccc;
    height: 836px;
    overflow: hidden;
}

.q-head {
    display: flex;
    justify-content: space-between;
    height: 52px;
    border-top: 1px solid #ccc;
}

.q-head.stub {
    justify-content: flex-end;
    height: 8px;
    border-top: none;
}

.q-title {
    margin: 0;
    padding: 6px 0 0 53px;
    font-size: 17.5px;
    line-height: 24px;
    font-weight: 700;
    color: #333;
}

.q-points {
    display: flex;
    align-items: flex-start;
    gap: 12px;
    width: 258px;
    padding: 4px 38px 0 16px;
    border-left: 1px solid #ccc;
    border-bottom: 1px solid #ccc;
    border-bottom-left-radius: 6px;
}

.q-points strong {
    margin-top: 7px;
    font-size: 16px;
    line-height: 22px;
    color: #111;
    white-space: nowrap;
}

.save-btn {
    width: 119px;
    height: 38px;
    padding: 0 0 2px;
    border: none;
    border-radius: 2px;
    background: #dcdcdc;
    font-family: inherit;
    font-size: 14px;
    color: #444;
}

.q-body {
    padding-left: 38px;
}

.q-text {
    margin: 0;
    font-size: 15.95px;
    line-height: 23.5px;
    color: #111;
    white-space: nowrap;
}

.q-hint {
    margin: 0;
    padding-bottom: 1px;
    font-size: 15.95px;
    line-height: 20px;
    color: #222;
}

.editor {
    width: 1364px;
    border: 1px solid #ccc;
    border-bottom: none;
    color: #222f3e;
}

.editor:has(.status) {
    border-bottom: 1px solid #ccc;
}

.tb-row {
    display: flex;
    height: 49px;
    border-bottom: 1px solid #ccc;
}

.tb-row.thin {
    height: 48px;
    border-bottom-color: #eee;
}

.tb-group {
    display: flex;
    align-items: center;
    flex: none;
    padding: 0 5px;
    border-right: 1px solid #ccc;
}

.tb-group.sel {
    padding: 0;
}

.tb-group.last {
    border-right: none;
}

.btn,
.split,
.select {
    display: flex;
    align-items: center;
    justify-content: center;
    height: 42px;
    padding: 0;
    border: none;
    border-radius: 4px;
    background: none;
    font-family: inherit;
    color: inherit;
    fill: currentColor;
}

.btn {
    width: 42.5px;
}

.btn svg,
.split svg {
    width: 30px;
    height: 30px;
    flex: none;
}

.btn.off {
    color: #92979e;
}

.btn.on {
    background: #c8cacd;
}

.split {
    width: 62.5px;
    justify-content: flex-start;
    padding-left: 6px;
}

.split.tight {
    width: 60px;
    padding-left: 4px;
}

.split svg.chev,
.select svg.chev {
    width: 12.5px;
    height: 12.5px;
    margin-left: 10px;
    fill: #8f959c;
}

.split.tight svg.chev {
    margin-left: 5px;
}

.select {
    width: 172.5px;
    justify-content: space-between;
    padding: 1px 14px 0 15px;
    font-size: 16.4px;
}

.select svg.chev {
    flex: none;
    margin-top: -1px;
}

.swatch {
    fill: #000;
}

.icon-num {
    font-family: "Liberation Sans", sans-serif;
    font-size: 5.5px;
    font-weight: 700;
    text-anchor: middle;
}

.icon-abc {
    font-family: "Liberation Sans", sans-serif;
    font-size: 10px;
    text-anchor: middle;
}

.edit-area {
    height: 190px;
}

.status {
    display: flex;
    justify-content: space-between;
    height: 22px;
    padding: 0 10px;
    border-top: 1px solid #ccc;
    font-size: 14.5px;
    line-height: 21px;
    color: #7b838c;
}

.q-rule {
    width: 1389px;
    height: 1px;
    margin: 44px 0 25px;
    border: none;
    background: #ccc;
}
```
